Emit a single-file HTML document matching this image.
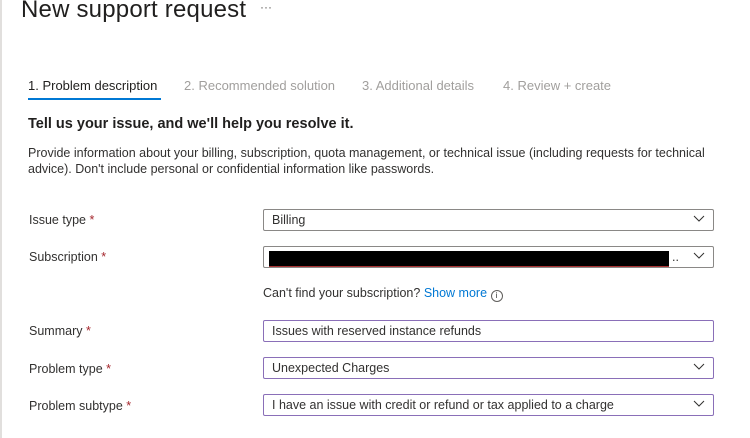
<!DOCTYPE html>
<html><head><style>
body{margin:0;width:750px;height:438px;background:#fff;font-family:"Liberation Sans",sans-serif;color:#222;position:relative;overflow:hidden}
.a{position:absolute;white-space:nowrap}
.lb{left:29px;font-size:12.5px;color:#323130}
.lb b{color:#a4262c;font-weight:normal}
.box{position:absolute;left:263px;width:441px;height:20px;border:1px solid #8a8886;border-radius:2px;font-size:12.5px;line-height:20px;padding-left:8px;box-sizing:content-box;color:#323130}
.box.p{border-color:#8a6fb8}
.chev{position:absolute;right:8px;top:5px;width:12px;height:8px}
</style></head><body>
<div class="a" style="left:0;top:0;width:2px;height:438px;background:#e1dfdd"></div>
<div class="a" style="left:21px;top:-4px;font-size:24px;color:#201f1e;letter-spacing:0.2px">New support request</div>
<div class="a" style="left:260px;top:0px;font-size:12px;color:#605e5c">···</div>
<div class="a" style="left:28px;top:78px;font-size:13px;color:#201f1e">1. Problem description</div>
<div class="a" style="left:28px;top:98px;width:133px;height:2px;background:#0078d4"></div>
<div class="a" style="left:184px;top:78px;font-size:13px;color:#a19f9d">2. Recommended solution</div>
<div class="a" style="left:362px;top:78px;font-size:13px;color:#a19f9d">3. Additional details</div>
<div class="a" style="left:503px;top:78px;font-size:13px;color:#a19f9d">4. Review + create</div>
<div class="a" style="left:28px;top:116px;font-size:14.5px;font-weight:bold;color:#201f1e">Tell us your issue, and we'll help you resolve it.</div>
<div class="a" style="left:28px;top:145px;font-size:12.5px;color:#323130;line-height:16px">Provide information about your billing, subscription, quota management, or technical issue (including requests for technical<br>advice). Don't include personal or confidential information like passwords.</div>
<div class="a lb" style="top:213px">Issue type <b>*</b></div>
<div class="a lb" style="top:250px">Subscription <b>*</b></div>
<div class="a lb" style="top:324px">Summary <b>*</b></div>
<div class="a lb" style="top:362px">Problem type <b>*</b></div>
<div class="a lb" style="top:399px">Problem subtype <b>*</b></div>
<div class="box" style="top:209px">Billing<svg class="chev"><path d="M1 1l5 5 5-5" stroke="#323130" fill="none"/></svg></div>
<div class="box" style="top:246px"><div style="position:absolute;left:5px;top:4px;width:400px;height:15px;background:#000;border-bottom:1px solid #a33"></div><span style="position:absolute;left:408px;top:0">..</span><svg class="chev"><path d="M1 1l5 5 5-5" stroke="#323130" fill="none"/></svg></div>
<div class="a" style="left:263px;top:286px;font-size:12.5px;color:#323130">Can't find your subscription? <span style="color:#0078d4">Show more</span> <span style="display:inline-block;width:10px;height:10px;border:1px solid #605e5c;border-radius:50%;font-size:8px;line-height:10px;text-align:center;vertical-align:-1px">i</span></div>
<div class="box p" style="top:320px">Issues with reserved instance refunds</div>
<div class="box p" style="top:357px">Unexpected Charges<svg class="chev"><path d="M1 1l5 5 5-5" stroke="#323130" fill="none"/></svg></div>
<div class="box p" style="top:394px">I have an issue with credit or refund or tax applied to a charge<svg class="chev"><path d="M1 1l5 5 5-5" stroke="#323130" fill="none"/></svg></div>
</body></html>
